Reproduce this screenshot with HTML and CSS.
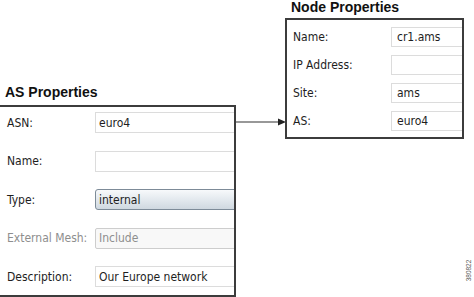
FILE: index.html
```html
<!DOCTYPE html>
<html>

<head>
  <title>AS and Node Properties</title>
  <link rel="stylesheet" href="styles.css">
</head>

<body>

  <div class="canvas">

    <div class="panel as-panel">
      <h2 class="panel-title">AS Properties</h2>
      <div class="panel-box">
        <div class="row">
          <label for="asn">ASN:</label>
          <input type="text" id="asn" class="field" value="euro4">
        </div>
        <div class="row">
          <label for="asName">Name:</label>
          <input type="text" id="asName" class="field" value="">
        </div>
        <div class="row">
          <label for="asType">Type:</label>
          <select id="asType" class="field select">
            <option>internal</option>
          </select>
        </div>
        <div class="row disabled">
          <label for="mesh">External Mesh:</label>
          <input type="text" id="mesh" class="field" value="Include" disabled>
        </div>
        <div class="row">
          <label for="desc">Description:</label>
          <input type="text" id="desc" class="field" value="Our Europe network">
        </div>
      </div>
    </div>

    <svg class="connector" width="52" height="12" viewBox="0 0 52 12">
      <line x1="0" y1="6" x2="44" y2="6" stroke="#333" stroke-width="1.2" />
      <polygon points="42,2.5 50,6 42,9.5" fill="#222" />
    </svg>

    <div class="panel node-panel">
      <h2 class="panel-title">Node Properties</h2>
      <div class="panel-box">
        <div class="row">
          <label for="nodeName">Name:</label>
          <input type="text" id="nodeName" class="field" value="cr1.ams">
        </div>
        <div class="row">
          <label for="ip">IP Address:</label>
          <input type="text" id="ip" class="field" value="">
        </div>
        <div class="row">
          <label for="site">Site:</label>
          <input type="text" id="site" class="field" value="ams">
        </div>
        <div class="row">
          <label for="nodeAs">AS:</label>
          <input type="text" id="nodeAs" class="field" value="euro4">
        </div>
      </div>
    </div>

    <span class="figure-id">380822</span>

  </div>

</body>

</html>
```

FILE: styles.css
```css
body {
  margin: 0;
  background: #fff;
}

.canvas {
  position: relative;
  width: 474px;
  height: 297px;
  overflow: hidden;
  font-family: "DejaVu Sans Condensed", "DejaVu Sans", sans-serif;
  font-size: 12px;
  color: #1e1e1e;
}

/* panels sit on the diagram at fixed spots */
.panel {
  position: absolute;
}

.panel-title {
  margin: 0;
  font-family: "Liberation Sans", Arial, sans-serif;
  font-size: 14px;
  font-weight: bold;
  line-height: 18px;
  color: #111;
}

.panel-box {
  box-sizing: border-box;
  border: 2px solid #3c3c3c;
  overflow: hidden;
  display: flex;
  flex-direction: column;
}

.row {
  display: flex;
  align-items: center;
  flex-shrink: 0;
}

.row label {
  flex-shrink: 0;
}

.field {
  box-sizing: border-box;
  flex-shrink: 0;
  margin: 0;
  padding: 0 3px;
  font-family: inherit;
  font-size: 12px;
  color: #1e1e1e;
  background: #fff;
  border: 1px solid #dcdcdc;
  border-radius: 0;
  outline: none;
}

/* AS Properties */
.as-panel {
  left: -2px;
  top: 83px;
}

.as-panel .panel-title {
  padding-left: 7px;
}

.as-panel .panel-box {
  margin-top: 4px;
  width: 238px;
  height: 192px;
  padding: 5px 0 0 7px;
  gap: 17.5px;
}

.as-panel .row {
  height: 21px;
}

.as-panel .row label {
  width: 88px;
}

.as-panel .field {
  width: 160px;
  height: 21px;
}

.select {
  -webkit-appearance: none;
  appearance: none;
  border: 1px solid #7d8b98;
  border-radius: 3px;
  background: linear-gradient(#f7f9fb, #e3e9ee 50%, #cfd8e0);
}

.row.disabled label {
  color: #8e8e8e;
}

.row.disabled .field {
  color: #8e8e8e;
  background: #f8f8f8;
  border-color: #cdcdcd;
  border-radius: 2px;
}

/* Node Properties */
.node-panel {
  left: 285px;
  top: -2px;
}

.node-panel .panel-title {
  padding-left: 6px;
}

.node-panel .panel-box {
  margin-top: 2px;
  width: 179px;
  height: 121px;
  padding: 7px 0 0 6px;
  gap: 8px;
}

.node-panel .row {
  height: 20px;
}

.node-panel .row label {
  width: 98px;
}

.node-panel .field {
  width: 90px;
  height: 20px;
  padding: 0 5px;
}

.connector {
  position: absolute;
  left: 236px;
  top: 116px;
}

.figure-id {
  position: absolute;
  left: 458px;
  top: 267px;
  font-family: "Liberation Sans", Arial, sans-serif;
  font-size: 6.5px;
  color: #555;
  transform: rotate(-90deg);
}
```
